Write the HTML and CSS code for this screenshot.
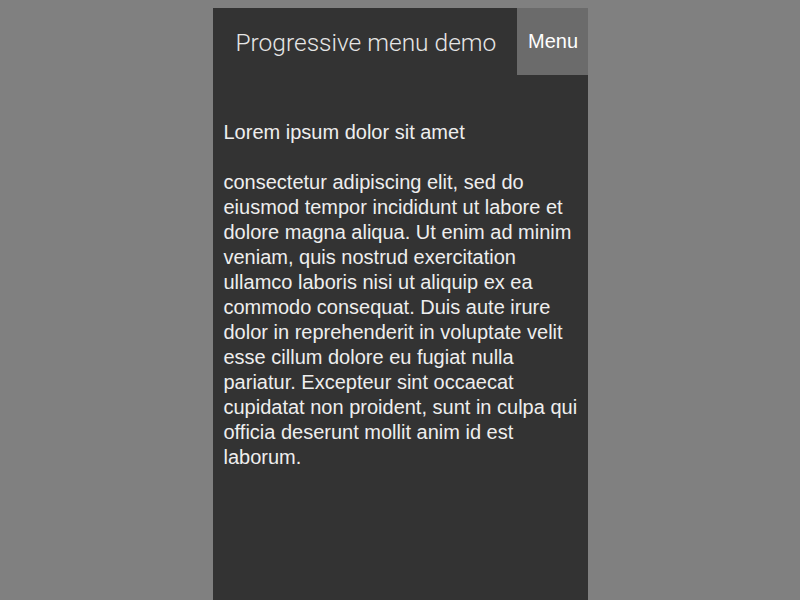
FILE: index.html
```html
<!DOCTYPE html>
<html lang="en">
<head>
<meta charset="utf-8">
<title>Progressive menu demo</title>
<link rel="stylesheet" href="styles.css">
</head>
<body>
<div class="page">
  <header class="topbar">
    <h1 class="title">Progressive menu demo</h1>
    <button class="menu-btn" type="button">Menu</button>
  </header>
  <main class="content">
    <p>Lorem ipsum dolor sit amet</p>
    <p>consectetur adipiscing elit, sed do eiusmod tempor incididunt ut labore et dolore magna aliqua. Ut enim ad minim veniam, quis nostrud exercitation ullamco laboris nisi ut aliquip ex ea commodo consequat. Duis aute irure dolor in reprehenderit in voluptate velit esse cillum dolore eu fugiat nulla pariatur. Excepteur sint occaecat cupidatat non proident, sunt in culpa qui officia deserunt mollit anim id est laborum.</p>
  </main>
</div>
</body>
</html>
```
FILE: styles.css
```css
html, body {
  height: 100%;
}

body {
  margin: 0;
  padding-top: 8px;
  box-sizing: border-box;
  background: #808080;
  font-family: "Liberation Sans", Arial, sans-serif;
  overflow: hidden;
}

.page {
  width: 375px;
  min-height: 600px;
  margin: 0 auto;
  background: #333333;
  color: #eeeeee;
}

.topbar {
  display: flex;
  align-items: stretch;
  height: 67px;
}

.title {
  flex: 1;
  margin: 0;
  padding: 1px 0 0 23px;
  display: flex;
  align-items: center;
  font-family: Roboto, "Liberation Sans", sans-serif;
  font-weight: 300;
  font-size: 24.5px;
  color: #e6e6e6;
}

.menu-btn {
  width: 71px;
  border: 0;
  margin: 0;
  padding: 0 0 0 2px;
  background: #6b6b6b;
  color: #ffffff;
  font-family: "Liberation Sans", Arial, sans-serif;
  font-size: 20px;
}

.content {
  padding: 45px 6px 0 11px;
}

.content p {
  margin: 0 0 25px;
  font-size: 20px;
  line-height: 25px;
}
```
